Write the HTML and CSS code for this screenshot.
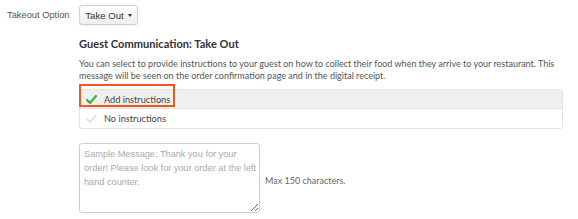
FILE: index.html
```html
<!DOCTYPE html>
<html>
<head>
<meta charset="utf-8">
<link rel="stylesheet" href="styles.css">
</head>
<body>
<div class="page">
  <div class="row">
    <div class="label">Takeout Option</div>
    <div class="content">
      <button class="btn">Take Out <span class="caret"></span></button>
      <h2 class="title">Guest Communication: Take Out</h2>
      <p class="desc">You can select to provide instructions to your guest on how to collect their food when they arrive to your restaurant. This message will be seen on the order confirmation page and in the digital receipt.</p>
      <div class="list">
        <div class="item active">
          <svg class="check" width="11" height="9" viewBox="0 0 11 9"><path d="M1 5 L4 8 L10 1" fill="none" stroke="#3db33d" stroke-width="2.2" stroke-linecap="round" stroke-linejoin="round"/></svg>
          <span>Add instructions</span>
          <div class="highlight"></div>
        </div>
        <div class="item">
          <svg class="check" width="11" height="9" viewBox="0 0 11 9"><path d="M1 5 L4 8 L10 1" fill="none" stroke="#dcdcdc" stroke-width="1.6" stroke-linecap="round" stroke-linejoin="round"/></svg>
          <span>No instructions</span>
        </div>
      </div>
      <div class="msg">
        <textarea class="ta" placeholder="Sample Message: Thank you for your order! Please look for your order at the left hand counter."></textarea>
        <span class="max">Max 150 characters.</span>
      </div>
    </div>
  </div>
</div>
</body>
</html>
```
FILE: styles.css
```css
* { box-sizing: border-box; }
body { margin: 0; background: #fff; }
.page { padding: 5px 15px 0 7px; }
.row { display: flex; }
.label {
  width: 72px;
  flex: none;
  white-space: nowrap;
  font-family: "Liberation Sans", Arial, sans-serif;
  font-size: 9.3px;
  color: #555;
  padding-top: 4px;
  line-height: 12px;
}
.content { flex: 1; display: flex; flex-direction: column; align-items: flex-start; }
.btn {
  font-family: "Liberation Sans", Arial, sans-serif;
  font-size: 9.6px;
  color: #333;
  height: 20px;
  width: 59px;
  padding: 0;
  border: 1px solid #d0d0d0;
  border-radius: 3px;
  background: linear-gradient(#fff, #efefef);
  box-shadow: 0 1px 1px rgba(0,0,0,0.06);
  display: flex;
  align-items: center;
  justify-content: center;
  gap: 4px;
  white-space: nowrap;
}
.caret {
  display: inline-block;
  width: 0; height: 0;
  border-left: 2.5px solid transparent;
  border-right: 2.5px solid transparent;
  border-top: 3px solid #333;
}
.title {
  font-family: Lato, sans-serif;
  font-weight: 700;
  font-size: 11.1px;
  color: #333;
  margin: 12px 0 0 0;
  line-height: 14px;
}
.desc {
  font-family: Lato, sans-serif;
  font-size: 9px;
  color: #555;
  line-height: 12px;
  margin: 7px 0 0 0;
}
.list {
  margin-top: 7px;
  width: 100%;
  border: 1px solid #e2e2e2;
  border-radius: 3px;
}
.item {
  position: relative;
  height: 19px;
  display: flex;
  align-items: center;
  padding-left: 6px;
  gap: 7px;
  font-family: Lato, sans-serif;
  font-size: 9.2px;
  color: #444;
}
.item.active { background: #efefef; border-bottom: 1px solid #e2e2e2; height: 19px; }
.check { flex: none; }
.highlight {
  position: absolute;
  left: -1px;
  top: -6px;
  width: 96px;
  height: 23px;
  border: 2px solid #ea5a1e;
}
.msg { display: flex; align-items: center; margin-top: 14px; gap: 5px; }
.ta {
  width: 181px;
  height: 70px;
  border: 1px solid #ccc;
  border-radius: 3px;
  padding: 3px 2px 3px 4px;
  font-family: "Liberation Sans", Arial, sans-serif;
  font-size: 9.2px;
  line-height: 14px;
  resize: vertical;
}
.ta::placeholder { color: #aaa; }
.max {
  font-family: Lato, sans-serif;
  font-size: 9px;
  color: #666;
  margin-top: 4px;
}
```
